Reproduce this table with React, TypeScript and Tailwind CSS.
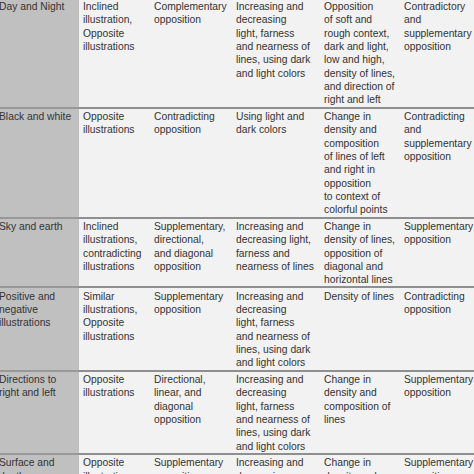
const rows: string[][][] = [
  [
    ['Day and Night'],
    ['Inclined', 'illustration,', 'Opposite', 'illustrations'],
    ['Complementary', 'opposition'],
    ['Increasing and', 'decreasing', 'light, farness', 'and nearness of', 'lines, using dark', 'and light colors'],
    ['Opposition', 'of soft and', 'rough context,', 'dark and light,', 'low and high,', 'density of lines,', 'and direction of', 'right and left'],
    ['Contradictory', 'and', 'supplementary', 'opposition'],
  ],
  [
    ['Black and white'],
    ['Opposite', 'illustrations'],
    ['Contradicting', 'opposition'],
    ['Using light and', 'dark colors'],
    ['Change in', 'density and', 'composition', 'of lines of left', 'and right in', 'opposition', 'to context of', 'colorful points'],
    ['Contradicting', 'and', 'supplementary', 'opposition'],
  ],
  [
    ['Sky and earth'],
    ['Inclined', 'illustrations,', 'contradicting', 'illustrations'],
    ['Supplementary,', 'directional,', 'and diagonal', 'opposition'],
    ['Increasing and', 'decreasing light,', 'farness and', 'nearness of lines'],
    ['Change in', 'density of lines,', 'opposition of', 'diagonal and', 'horizontal lines'],
    ['Supplementary', 'opposition'],
  ],
  [
    ['Positive and', 'negative', 'illustrations'],
    ['Similar', 'illustrations,', 'Opposite', 'illustrations'],
    ['Supplementary', 'opposition'],
    ['Increasing and', 'decreasing', 'light, farness', 'and nearness of', 'lines, using dark', 'and light colors'],
    ['Density of lines'],
    ['Contradicting', 'opposition'],
  ],
  [
    ['Directions to', 'right and left'],
    ['Opposite', 'illustrations'],
    ['Directional,', 'linear, and', 'diagonal', 'opposition'],
    ['Increasing and', 'decreasing', 'light, farness', 'and nearness of', 'lines, using dark', 'and light colors'],
    ['Change in', 'density and', 'composition of', 'lines'],
    ['Supplementary', 'opposition'],
  ],
  [
    ['Surface and', 'depth'],
    ['Opposite', 'illustrations'],
    ['Supplementary', 'opposition'],
    ['Increasing and', 'decreasing', 'light, farness'],
    ['Change in', 'density and', 'composition of'],
    ['Supplementary', 'opposition'],
  ],
]

function Cell({ lines, first }: { lines: string[]; first?: boolean }) {
  return (
    <div
      className={
        first
          ? 'bg-[#c0c0c0] pl-1 pt-[1.3px] border-b-2 border-[#989898]'
          : 'pl-1 pt-[1.3px] border-b-2 border-[#8f8f8f]'
      }
    >
      {lines.map((l, i) => (
        <div key={i} className="whitespace-nowrap">{l}</div>
      ))}
    </div>
  )
}

export default function App() {
  return (
    <div className="w-[474px] h-[474px] overflow-hidden bg-[#f2f2f2]">
      <div
        className="ml-[-5px] mt-[-1.3px] grid grid-cols-[84px_71px_82px_88px_80px_80px] text-[10.3px] leading-[13.33px] text-[#333333]"
        style={{ fontFamily: '"Liberation Sans", Arial, sans-serif' }}
      >
        {rows.map((row, r) =>
          row.map((cell, c) => <Cell key={r + '-' + c} lines={cell} first={c === 0} />)
        )}
      </div>
    </div>
  )
}
